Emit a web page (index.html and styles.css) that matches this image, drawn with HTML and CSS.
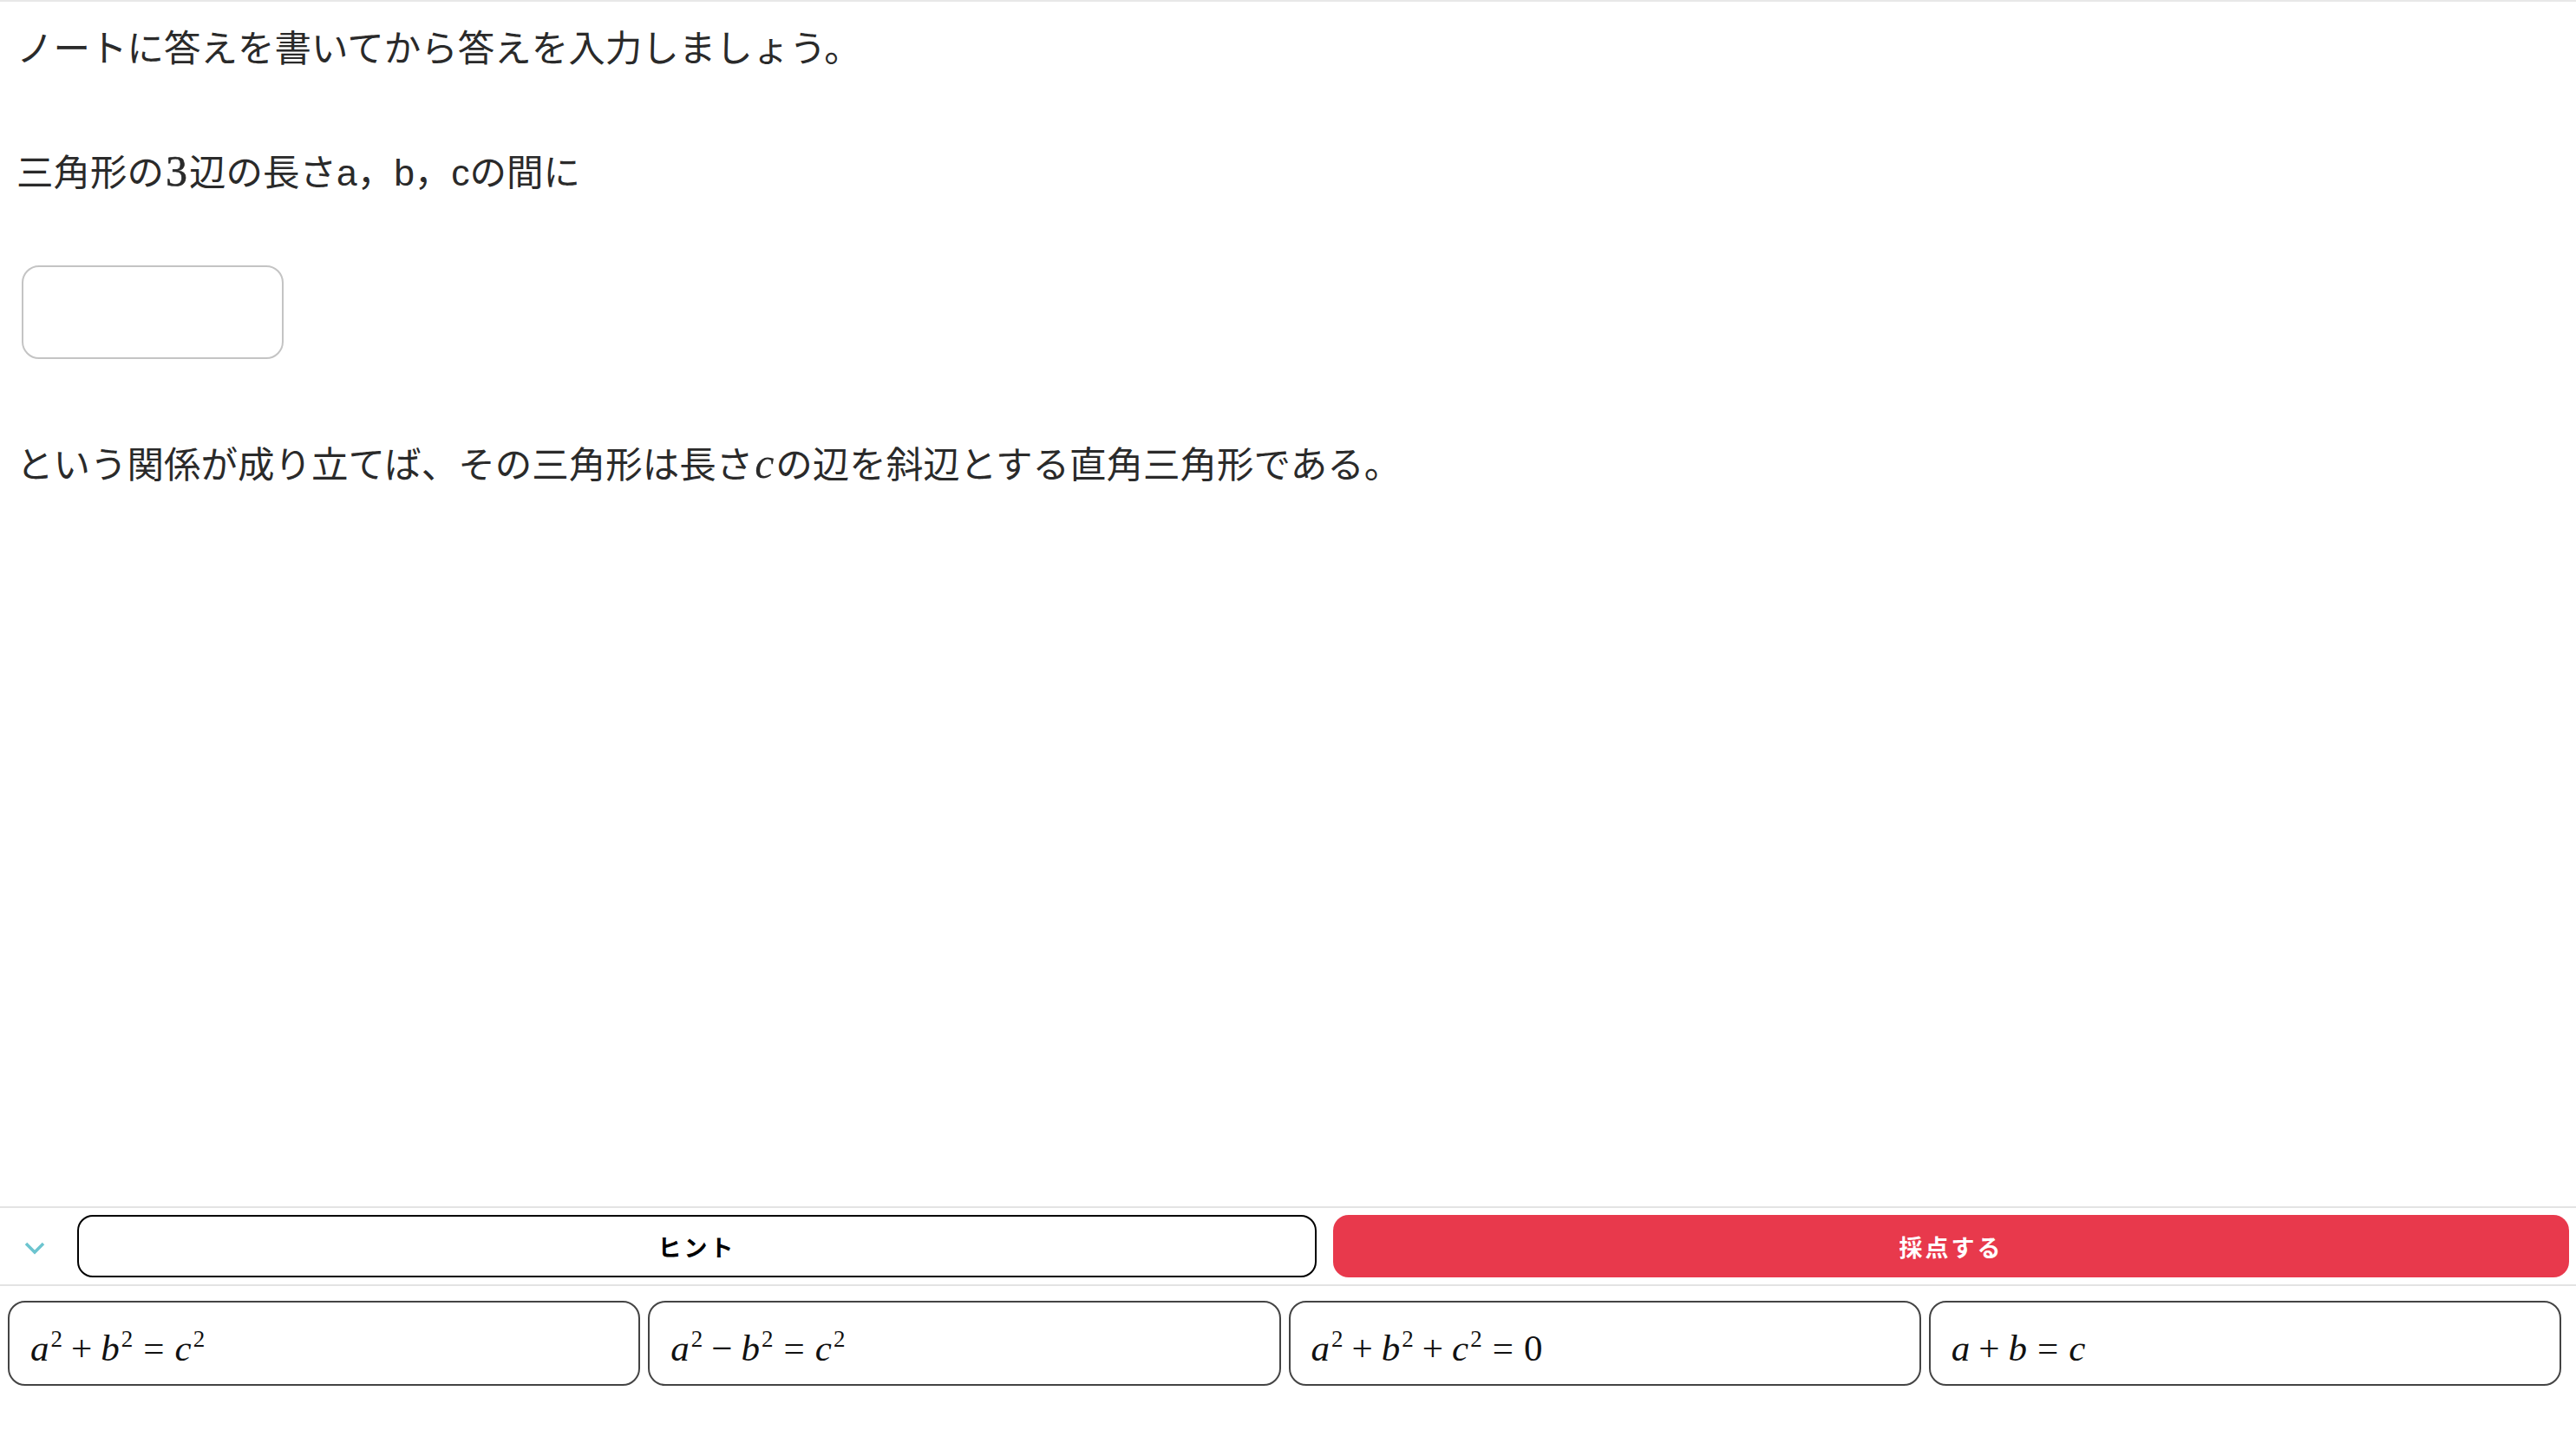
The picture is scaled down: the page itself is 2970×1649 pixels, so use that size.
FILE: index.html
```html
<!DOCTYPE html>
<html lang="ja">
<head>
<meta charset="utf-8">
<title>問題</title>
<link rel="stylesheet" href="styles.css">
</head>
<body>
<div class="page">
  <main class="content">
    <p class="q q1">ノートに答えを書いてから答えを入力しましょう。</p>
    <p class="q q2">三角形の<span class="mn">3</span>辺の長さa，b，cの間に</p>
    <div class="answer-box"></div>
    <p class="q q3">という関係が成り立てば、その三角形は長さ<span class="mi">c</span>の辺を斜辺とする直角三角形である。</p>
  </main>
  <footer class="footer">
    <div class="actions">
      <button class="toggle" type="button" aria-label="閉じる">
        <svg width="24" height="15" viewBox="0 0 24 15"><polyline points="2,2 12,12 22,2" fill="none" stroke="#6cc4cf" stroke-width="3.5"/></svg>
      </button>
      <button class="btn hint" type="button">ヒント</button>
      <button class="btn grade" type="button">採点する</button>
    </div>
    <div class="choices">
      <button class="choice" type="button"><span class="math"><i>a</i><sup>2</sup><span class="bin">+</span><i>b</i><sup>2</sup><span class="rel">=</span><i>c</i><sup>2</sup></span></button>
      <button class="choice" type="button"><span class="math"><i>a</i><sup>2</sup><span class="bin">−</span><i>b</i><sup>2</sup><span class="rel">=</span><i>c</i><sup>2</sup></span></button>
      <button class="choice" type="button"><span class="math"><i>a</i><sup>2</sup><span class="bin">+</span><i>b</i><sup>2</sup><span class="bin">+</span><i>c</i><sup>2</sup><span class="rel">=</span>0</span></button>
      <button class="choice" type="button"><span class="math"><i>a</i><span class="bin">+</span><i>b</i><span class="rel">=</span><i>c</i></span></button>
    </div>
  </footer>
</div>
</body>
</html>
```
FILE: styles.css
```css
html, body {
  margin: 0;
  padding: 0;
  background: #fff;
}

.page {
  height: 100vh;
  display: flex;
  flex-direction: column;
  box-sizing: border-box;
  border-top: 2px solid #e8e8e8;
}

.content {
  flex: 1;
  padding: 24px 20px 0 19px;
  font-family: "Liberation Sans", "Noto Sans CJK JP", sans-serif;
  font-size: 42.5px;
  line-height: 62px;
  color: #2a2a2a;
}

.q {
  margin: 0;
}

.q2 {
  margin-top: 81px;
}

.q3 {
  margin-top: 92px;
}

.mn {
  font-family: "Liberation Serif", "DejaVu Serif", serif;
  font-size: 50px;
  line-height: 1;
  margin: 0 2px;
  -webkit-text-stroke: 0.6px #2a2a2a;
}

.mi {
  font-family: "Liberation Serif", "DejaVu Serif", serif;
  font-style: italic;
  font-size: 50px;
  line-height: 1;
  margin: 0 2px;
}

.answer-box {
  margin: 75px 0 0 6px;
  width: 302px;
  height: 108px;
  box-sizing: border-box;
  border: 2px solid #c4c4c4;
  border-radius: 20px;
}

.footer {
  border-top: 2px solid #e3e3e3;
  font-family: "Noto Sans CJK JP", sans-serif;
}

.actions {
  display: flex;
  align-items: center;
  padding: 8px 8px 8px 0;
  border-bottom: 2px solid #e3e3e3;
}

.toggle {
  width: 89px;
  height: 72px;
  padding: 4px 0 0 28px;
  margin: 0;
  border: 0;
  background: none;
  display: flex;
  align-items: center;
  flex: none;
  box-sizing: border-box;
}

.toggle svg {
  display: block;
}

.btn {
  flex: 1;
  height: 72px;
  box-sizing: border-box;
  border-radius: 18px;
  font-family: "Noto Sans CJK JP", sans-serif;
  font-size: 27px;
  font-weight: 700;
  letter-spacing: 3px;
  margin: 0;
  padding: 0;
}

.hint {
  background: #fff;
  border: 2.5px solid #000;
  color: #000;
}

.grade {
  margin-left: 19px;
  background: #e8394c;
  border: 0;
  color: #fff;
}

.choices {
  display: grid;
  grid-template-columns: repeat(4, 1fr);
  gap: 9px;
  padding: 17px 17px 51px 9px;
}

.choice {
  height: 98px;
  box-sizing: border-box;
  border: 2px solid #444;
  border-radius: 20px;
  background: #fff;
  margin: 0;
  padding: 0 0 0 24px;
  display: flex;
  align-items: center;
  text-align: left;
  color: #111;
}

.math {
  font-family: "Liberation Serif", "DejaVu Serif", serif;
  font-size: 43px;
  line-height: 1;
  white-space: nowrap;
  padding-top: 10px;
}

.math i {
  font-style: italic;
}

.math sup {
  font-size: 27px;
  vertical-align: 16px;
  line-height: 0;
  margin-left: 2px;
}

.bin {
  margin: 0 10px;
}

.rel {
  margin: 0 12px;
}
```
